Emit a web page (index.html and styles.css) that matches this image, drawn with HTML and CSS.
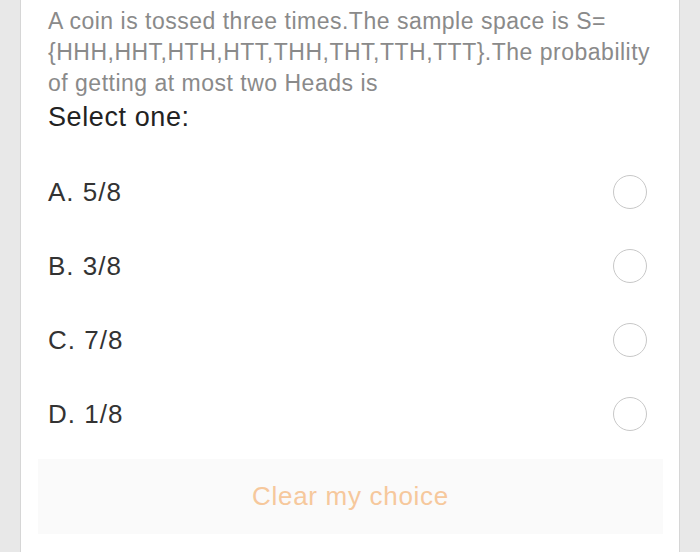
FILE: index.html
```html
<!DOCTYPE html>
<html lang="en">
<head>
    <meta charset="UTF-8">
    <title>Question</title>
    <link rel="stylesheet" href="styles.css">
</head>
<body>
    <div class="card">
        <p class="question">A coin is tossed three times.The sample space is S={HHH,HHT,HTH,HTT,THH,THT,TTH,TTT}.The probability of getting at most two Heads is</p>
        <p class="prompt">Select one:</p>

        <div class="options">
            <label class="option">
                <span>A. 5/8</span>
                <span class="radio"></span>
            </label>
            <label class="option">
                <span>B. 3/8</span>
                <span class="radio"></span>
            </label>
            <label class="option">
                <span>C. 7/8</span>
                <span class="radio"></span>
            </label>
            <label class="option">
                <span>D. 1/8</span>
                <span class="radio"></span>
            </label>
        </div>

        <div class="clear">Clear my choice</div>
    </div>
</body>
</html>
```

FILE: styles.css
```css
body {
    margin: 0;
    background: #e8e8e8;
    font-family: "Liberation Sans", Arial, sans-serif;
}
.card {
    margin: 0 20px;
    min-height: 552px;
    box-sizing: border-box;
    background: white;
    border-left: 1px solid #d6d6d6;
    border-right: 1px solid #d6d6d6;
    padding: 6px 16px 0 27px;
}
.question {
    margin: 0;
    font-size: 23px;
    line-height: 31px;
    letter-spacing: 0.5px;
    color: #8a8a8a;
}
.prompt {
    margin: 1px 0 0;
    font-size: 27px;
    line-height: 34px;
    letter-spacing: 0.6px;
    color: #222;
}
.options {
    margin-top: 21px;
    padding-right: 16px;
}
.option {
    display: flex;
    justify-content: space-between;
    align-items: center;
    height: 74px;
    font-size: 26px;
    letter-spacing: 1px;
    color: #333;
}
.radio {
    width: 32px;
    height: 32px;
    border: 1.5px solid #c8c8c8;
    border-radius: 50%;
}
.clear {
    margin: 8px 0 0 -10px;
    width: 625px;
    height: 75px;
    line-height: 75px;
    background: #fafafa;
    text-align: center;
    font-size: 26px;
    letter-spacing: 0.7px;
    color: #f6c89c;
}
```
